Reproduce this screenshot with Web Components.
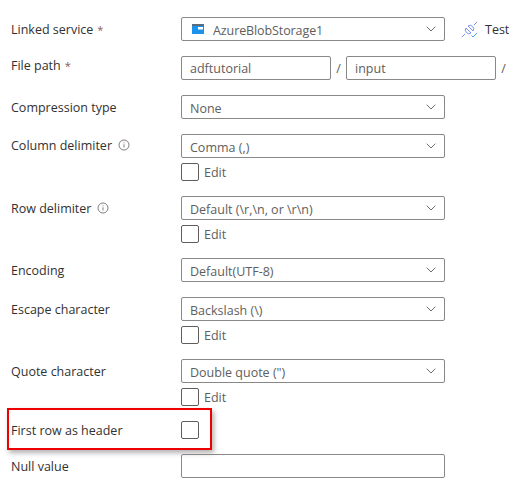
<!DOCTYPE html>
<html><head><meta charset="utf-8"><style>
html,body{margin:0;background:#fff;}
body{font:12.5px "Open Sans","Noto Sans",sans-serif;color:#323130;}
</style></head><body>
<x-form>
<x-field label="Linked service" required>
  <x-select value="AzureBlobStorage1" icon></x-select>
  <x-test slot="after"></x-test>
</x-field>
<x-field label="File path" required raised><x-path></x-path></x-field>
<x-field label="Compression type"><x-select value="None"></x-select></x-field>
<x-field label="Column delimiter" info nudge><x-select value="Comma (,)"></x-select><x-check label="Edit"></x-check></x-field>
<x-field label="Row delimiter" info><x-select value="Default (\r,\n, or \r\n)"></x-select><x-check label="Edit"></x-check></x-field>
<x-field label="Encoding"><x-select value="Default(UTF-8)"></x-select></x-field>
<x-field label="Escape character"><x-select value="Backslash (\)"></x-select><x-check label="Edit"></x-check></x-field>
<x-field label="Quote character"><x-select value="Double quote (&quot;)"></x-select><x-check label="Edit"></x-check></x-field>
<x-field label="First row as header" highlight><x-check></x-check></x-field>
<x-field label="Null value"><x-input style="width:264px"></x-input></x-field>
</x-form>
<script>
function def(name, html){
  customElements.define(name, class extends HTMLElement{
    constructor(){super();this.attachShadow({mode:'open'});}
    connectedCallback(){this.shadowRoot.innerHTML=html(this);}
  });
}
const esc=s=>String(s).replace(/&/g,'&amp;').replace(/</g,'&lt;').replace(/"/g,'&quot;');
def('x-form',()=>`<style>:host{display:flex;flex-direction:column;gap:15px;padding:17px 0 0 11px;width:498px;position:relative}</style><slot></slot>`);
def('x-field',el=>{
  const req=el.hasAttribute('required'), info=el.hasAttribute('info'), hl=el.hasAttribute('highlight');
  const raised=el.hasAttribute('raised'), nudge=el.hasAttribute('nudge');
  return `<style>
  :host{display:flex;position:relative;align-items:flex-start}
  .l{width:170px;flex:none;height:24px;display:flex;align-items:center;gap:6px;color:#323130;white-space:nowrap;box-sizing:border-box;${raised?'padding-bottom:6px;':''}${nudge?'padding-bottom:2px;':''}}
  :host([highlight]) .l{height:18px}
  .s{color:#8a5a5c;font-size:11px;margin-left:-2px}
  .c{display:flex;flex-direction:column;gap:5px;flex:none}
  .hl{position:absolute;left:-4px;top:-13px;width:201px;height:38px;border:2px solid #ee0000;box-shadow:2px 3px 5px rgba(0,0,0,.3);pointer-events:none}
  svg{display:block}
  </style>
  <div class="l"><span>${esc(el.getAttribute('label'))}</span>${req?'<span class="s">*</span>':''}${info?`<svg width="12" height="12" viewBox="0 0 12 12" fill="none" stroke="#605e5c" stroke-width=".8"><circle cx="6" cy="6" r="5"/><path d="M6 5.3v3.2M6 3.4v.9"/></svg>`:''}</div>
  <div class="c"><slot></slot></div><slot name="after"></slot>
  ${hl?'<div class="hl"></div>':''}`;
});
def('x-select',el=>{
  const icon=el.hasAttribute('icon');
  return `<style>
  :host{display:flex;box-sizing:border-box;width:264px;height:24px;border:1px solid #8a8886;border-radius:2px;align-items:center;padding:0 8px 0 8px;color:#605e5c;background:#fff}
  .v{flex:1;white-space:nowrap;padding-top:2px;${icon?'letter-spacing:-.1px':''}}
  svg{display:block;flex:none}
  .i{margin:0 9px 0 2px}
  </style>
  ${icon?`<svg class="i" width="12" height="10" viewBox="0 0 12 10"><rect x="0" y="0" width="12" height="10" fill="#1b93eb"/><rect x="0" y="0" width="12" height="2" fill="#5a6b7d"/><rect x="6" y="3" width="5" height="2.5" fill="#fff"/></svg>`:''}
  <span class="v">${esc(el.getAttribute('value'))}</span>
  <svg width="10" height="6" viewBox="0 0 10 6" fill="none" stroke="#605e5c" stroke-width=".9"><path d="M.7 .7l4.3 4.3 4.3-4.3"/></svg>`;
});
def('x-input',()=>`<style>:host{display:flex;box-sizing:border-box;height:24px;border:1px solid #8a8886;border-radius:2px;align-items:center;padding:0 8px;color:#605e5c;white-space:nowrap}</style><slot></slot>`);
def('x-path',()=>`<style>:host{display:flex;align-items:center;color:#605e5c}
 span{width:15px;text-align:center}
 </style><x-input style="width:150px">adftutorial</x-input><span>/</span><x-input style="width:150px">input</x-input><span>/</span>`);
def('x-check',el=>`<style>:host{display:flex;align-items:center;gap:5px;color:#605e5c;height:18px}
 i{display:block;box-sizing:border-box;width:18px;height:18px;border:1px solid #605e5c;border-radius:2px;background:#fff}
 </style><i></i>${el.getAttribute('label')?`<span>${esc(el.getAttribute('label'))}</span>`:''}`);
def('x-test',()=>`<style>:host{display:inline-flex;align-items:center;gap:7px;height:24px;margin-left:16px;color:#323130}
 svg{display:block}</style><svg width="17" height="17" viewBox="0 0 17 17" fill="none" stroke="#6b84f0" stroke-width=".9"><path d="M.8 16.2L4.2 12.8M12.8 4.2L16.2.8"/><path d="M5 7L10 12A3.6 3.6 0 0 1 5 7Z"/><path d="M7 5L12 10A3.6 3.6 0 0 0 7 5Z"/><path stroke="#3a96dd" d="M10.5 14.5l1.5 1.5 4-4"/></svg><span>Test</span>`);
</script>
</body></html>
